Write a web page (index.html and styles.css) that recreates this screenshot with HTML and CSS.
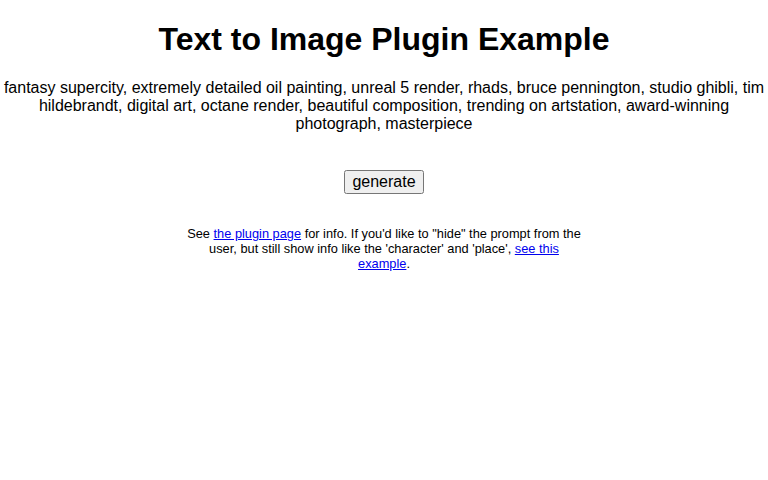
FILE: index.html
```html
<!DOCTYPE html>
<html lang="en">
<head>
<meta charset="UTF-8">
<meta name="viewport" content="width=device-width, initial-scale=1.0">
<title>Text to Image Plugin Example</title>
<link rel="stylesheet" href="styles.css">
</head>
<body>

<h1>Text to Image Plugin Example</h1>

<div class="prompt" id="prompt">fantasy supercity, extremely detailed oil painting, unreal 5 render, rhads, bruce pennington, studio ghibli, tim hildebrandt, digital art, octane render, beautiful composition, trending on artstation, award-winning photograph, masterpiece</div>

<div class="actions">
  <button class="btn-generate" onclick="generate()">generate</button>
</div>

<div class="output" id="output"></div>

<p class="note">See <a href="#">the plugin page</a> for info. If you'd like to "hide" the prompt from the user, but still show info like the 'character' and 'place', <a href="#">see this example</a>.</p>

<script>
function generate() {
  // no image service offline, just keep the prompt around
  const prompt = document.getElementById("prompt").innerText;
  document.getElementById("output").dataset.prompt = prompt;
}
</script>
</body>
</html>
```

FILE: styles.css
```css
body {
  font-family: "Liberation Sans", Arial, sans-serif;
  margin: 0;
  color: #000;
  background: #fff;
  text-align: center;
}

h1 {
  font-size: 32px;
  margin: 21px 0;
}

.prompt {
  font-size: 16px;
  line-height: 18px;
}

.actions {
  margin-top: 37px;
}

.btn-generate {
  font-family: "Liberation Sans", Arial, sans-serif;
  font-size: 16px;
}

.note {
  font-size: 0.8em;
  line-height: 15px;
  max-width: 400px;
  margin: 32px auto 0;
}

.note a {
  color: #0000ee;
}
```
